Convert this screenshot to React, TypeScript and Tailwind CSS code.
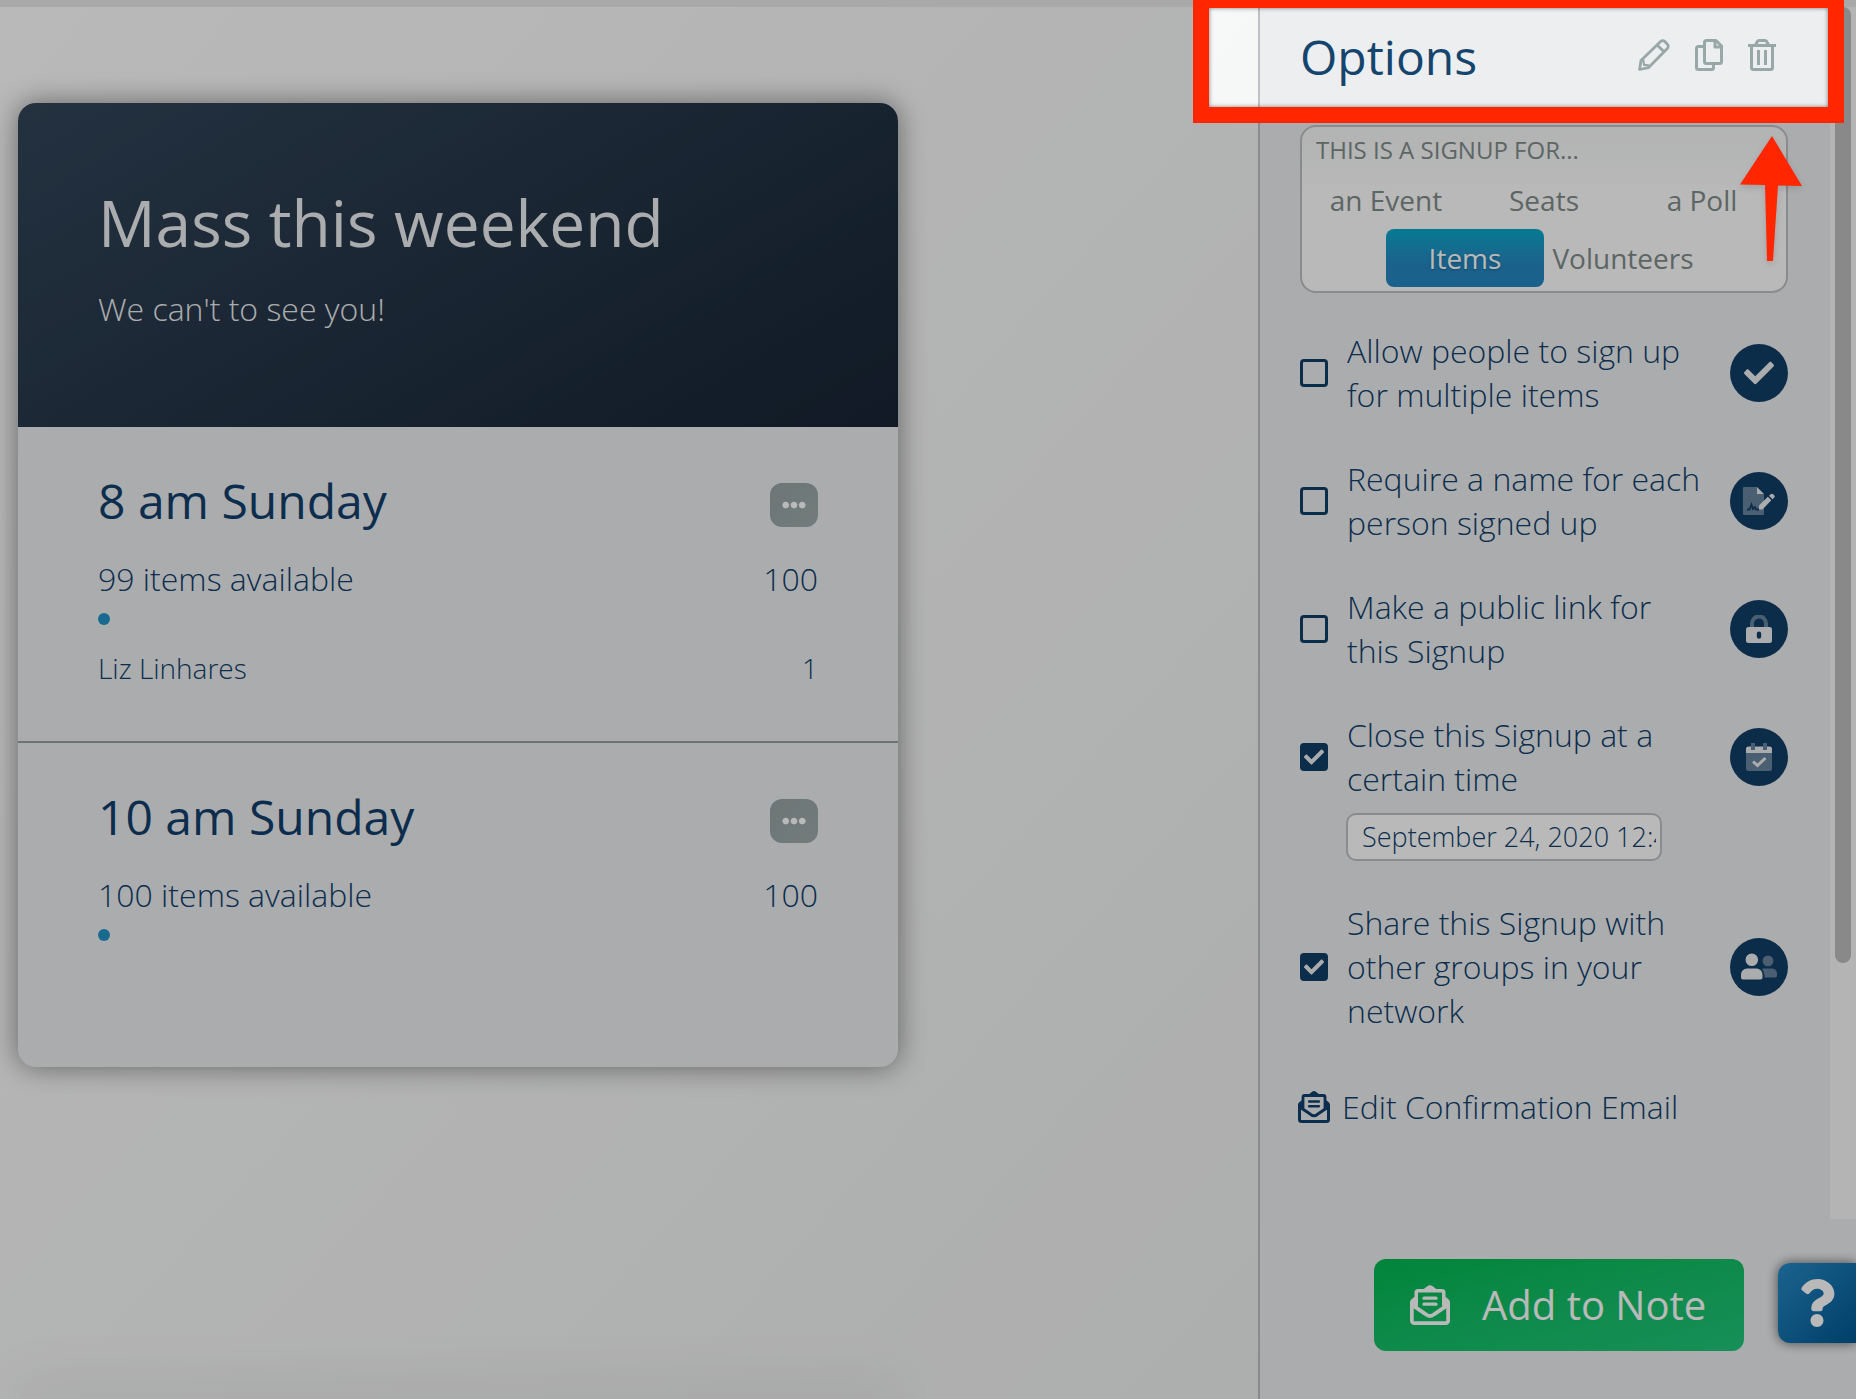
import React, { useState } from 'react';
import { FaCheck, FaEllipsisH, FaQuestion } from 'react-icons/fa';

interface IconProps {
  className?: string;
}

const PencilIcon: React.FC<IconProps> = ({ className }) => (
  <svg viewBox="0 0 32 32" fill="none" stroke="currentColor" strokeWidth="2.8" strokeLinejoin="round" className={className}>
    <path d="M3 21.5 22.6 2.6a3 3 0 0 1 4.2 0l2.6 2.6a3 3 0 0 1 0 4.2L10.6 28.6 1.6 30.5Z" />
    <path d="M19.4 6.2 25.8 12.6" />
    <path d="M3.6 21.6 5.4 21.6 6 25.8 10.4 26.4 10.6 28.4" strokeWidth="2.2" />
  </svg>
);

const CopyIcon: React.FC<IconProps> = ({ className }) => (
  <svg viewBox="0 0 28 32" fill="none" stroke="currentColor" strokeWidth="3" strokeLinejoin="round" className={className}>
    <path d="M8.5 7.5H3.5a2 2 0 0 0-2 2v19a2 2 0 0 0 2 2H16.5a2 2 0 0 0 2-2V25.5" />
    <path d="M11.5 1.5H21L26.5 7V22.5a2 2 0 0 1-2 2H11.5a2 2 0 0 1-2-2V3.5a2 2 0 0 1 2-2Z" />
    <path d="M20 1.5V8H26.5" />
  </svg>
);

const TrashIcon: React.FC<IconProps> = ({ className }) => (
  <svg viewBox="0 0 28 32" fill="none" stroke="currentColor" strokeWidth="3" strokeLinejoin="round" className={className}>
    <path d="M0 6.5H28" />
    <path d="M7.5 6 9.5 2.3Q10 1.5 11 1.5H17Q18 1.5 18.5 2.3L20.5 6" />
    <path d="M3.5 7V28.5a2 2 0 0 0 2 2H22.5a2 2 0 0 0 2-2V7" />
    <path d="M10.5 11V26M17.5 11V26" />
  </svg>
);

const EnvelopeIcon: React.FC<IconProps> = ({ className }) => (
  <svg viewBox="0 0 32 32" fill="none" stroke="currentColor" strokeWidth="3" strokeLinejoin="round" className={className}>
    <path d="M1.5 15V28.5a2 2 0 0 0 2 2H28.5a2 2 0 0 0 2-2V15" />
    <path d="M2.5 16.5 12.5 23.3Q16 26.2 19.5 23.3L29.5 16.5" />
    <path d="M5 17V6a1.5 1.5 0 0 1 1.5-1.5H25.5A1.5 1.5 0 0 1 27 6V17" strokeWidth="2.8" />
    <path d="M10 4 13.8 1Q16-.8 18.2 1L22 4ZM4.5 8.8 1.2 11.3Q0 12.3 0 14V16.5L4.5 19ZM27.5 8.8 30.8 11.3Q32 12.3 32 14V16.5L27.5 19Z" fill="currentColor" stroke="none" />
    <path d="M11.2 10.5H20.8M11.2 15.3H20.8" strokeWidth="2.6" strokeLinecap="round" />
  </svg>
);

const SignatureIcon: React.FC<IconProps> = ({ className }) => (
  <svg viewBox="0 0 32 28" fill="currentColor" className={className}>
    <path opacity=".4" d="M1 0H14V7H21V27a1 1 0 0 1-1 1H1a1 1 0 0 1-1-1V1a1 1 0 0 1 1-1Z" />
    <path d="M14 0 21 7H14ZM16 18.5 24.8 9.8 28.3 13.3 19.5 22.5H16ZM26 8.7 27.7 7.2Q29 6.2 30.2 7.2L31.2 8.2Q32.2 9.5 31.2 10.6L29.6 12.2Z" />
    <path d="M4 22.5H6.5L8.5 17.5 10 22 12 20 13 22.5H16" fill="none" stroke="#113e67" strokeWidth="1.8" />
  </svg>
);

const LockIcon: React.FC<IconProps> = ({ className }) => (
  <svg viewBox="0 0 26 28" className={className}>
    <path d="M6 12V8.5a7 7 0 0 1 14 0V12" fill="none" stroke="currentColor" strokeWidth="4" opacity=".4" />
    <path fill="currentColor" fillRule="evenodd" d="M2.5 12H23.5A2.5 2.5 0 0 1 26 14.5V25.5A2.5 2.5 0 0 1 23.5 28H2.5A2.5 2.5 0 0 1 0 25.5V14.5A2.5 2.5 0 0 1 2.5 12ZM13 16.5a2.2 2.2 0 0 0-2.2 2.2V21.5a2.2 2.2 0 0 0 4.4 0V18.7A2.2 2.2 0 0 0 13 16.5Z" />
  </svg>
);

const CalendarIcon: React.FC<IconProps> = ({ className }) => (
  <svg viewBox="0 0 26 28" fill="currentColor" className={className}>
    <path opacity=".4" d="M0 10H26V25.5a2.5 2.5 0 0 1-2.5 2.5H2.5A2.5 2.5 0 0 1 0 25.5ZM5 0H9V7H5ZM17 0H21V7H17Z" />
    <path d="M2.5 3.5H5V7H9V3.5H17V7H21V3.5H23.5A2.5 2.5 0 0 1 26 6V10H0V6A2.5 2.5 0 0 1 2.5 3.5Z" />
    <path d="M7 18.5 11.5 22.5 19.5 15" fill="none" stroke="currentColor" strokeWidth="3" />
  </svg>
);

const FriendsIcon: React.FC<IconProps> = ({ className }) => (
  <svg viewBox="0 0 36 28" fill="currentColor" className={className}>
    <path opacity=".4" d="M27 2.5a5.4 5.4 0 1 1 0 10.8 5.4 5.4 0 0 1 0-10.8ZM22 15.5H31a5 5 0 0 1 5 5V22.5a2 2 0 0 1-2 2H23.5Q23.5 18.5 21 16Z" />
    <path d="M10.8 .5a6.3 6.3 0 1 1 0 12.6 6.3 6.3 0 0 1 0-12.6ZM6 15.5H15.5a6 6 0 0 1 6 6V24.5a2 2 0 0 1-2 2H2a2 2 0 0 1-2-2V21.5a6 6 0 0 1 6-6Z" />
  </svg>
);

interface Slot {
  title: string;
  available: string;
  total: number;
  people: { name: string; count: number }[];
}

const slots: Slot[] = [
  { title: '8 am Sunday', available: '99 items available', total: 100, people: [{ name: 'Liz Linhares', count: 1 }] },
  { title: '10 am Sunday', available: '100 items available', total: 100, people: [] },
];

const signupTypes = ['an Event', 'Seats', 'a Poll', 'Items', 'Volunteers'];

const options = [
  { id: 'multiple', label: 'Allow people to sign up for multiple items', checked: false, icon: <FaCheck className="size-[30px]" /> },
  { id: 'names', label: 'Require a name for each person signed up', checked: false, icon: <SignatureIcon className="h-7 w-8" /> },
  { id: 'public', label: 'Make a public link for this Signup', checked: false, icon: <LockIcon className="h-7 w-[26px]" /> },
  { id: 'close', label: 'Close this Signup at a certain time', checked: true, date: 'September 24, 2020 12:45 PM', icon: <CalendarIcon className="h-7 w-[26px]" /> },
  { id: 'share', label: 'Share this Signup with other groups in your network', checked: true, icon: <FriendsIcon className="h-7 w-9" /> },
];

const SlotRow: React.FC<{ slot: Slot }> = ({ slot }) => (
  <section className="border-b-2 border-[#94a0a1] px-20 pt-10 pb-[54px] last:border-b-0 last:pb-[126px]">
    <div className="flex items-start justify-between">
      <h2 className="text-5xl leading-[68px]">{slot.title}</h2>
      <button
        type="button"
        aria-label="More"
        className="mt-4 flex h-11 w-12 items-center justify-center rounded-xl bg-linear-to-br from-[#97a3a3] to-[#9fabab] text-white"
      >
        <FaEllipsisH className="size-6" />
      </button>
    </div>
    <div className="mt-5 flex justify-between text-[32px] leading-12 font-light">
      <span>{slot.available}</span>
      <span>{slot.total}</span>
    </div>
    <div className="mt-[10px] size-3 rounded-full bg-[#2292c7]" />
    {slot.people.map((p) => (
      <div key={p.name} className="mt-6 flex justify-between text-[28px] leading-[38px] font-light">
        <span>{p.name}</span>
        <span>{p.count}</span>
      </div>
    ))}
  </section>
);

export default function App() {
  const [type, setType] = useState('Items');

  return (
    <div className="relative flex h-screen flex-col overflow-hidden bg-white font-['Open_Sans','Noto_Sans',sans-serif] text-[#113f6a]">
      <div className="h-[7px] shrink-0 bg-[#e9e9e9]" />

      <div className="flex min-h-0 flex-1">
        <main className="flex min-w-0 flex-1 flex-col justify-between overflow-hidden bg-linear-to-br from-white to-[#eff0f0] pt-24 pr-[360px] pl-[18px]">
          <article className="overflow-hidden rounded-[18px] bg-[#eceef0] shadow-[0_0_28px_rgba(0,0,0,0.45)]">
            <header className="bg-linear-150 from-[#324559] to-[#172434] px-20 pt-[74px] pb-[94px] text-[#eceef0]">
              <h1 className="text-[64px] leading-[92px]">Mass this weekend</h1>
              <p className="mt-4 text-[32px] leading-12 font-light">We can't to see you!</p>
            </header>
            {slots.map((slot) => (
              <SlotRow key={slot.title} slot={slot} />
            ))}
          </article>
          <div className="shadow-[0_0_60px_6px_rgba(0,0,0,0.2)]" />
        </main>

        <aside className="flex w-[598px] shrink-0 flex-col border-l-2 border-[#bdc0c4] bg-[#eceef0]">
          <div className="flex min-h-0 flex-1">
            <div className="flex-1 pr-[42px] pl-10">
              <header className="flex h-[118px] items-start justify-between pt-4 pr-3">
                <h2 className="text-5xl leading-[68px] text-[#15456d]">Options</h2>
                <div className="flex gap-[25px] pt-4 text-[#98a8a6]">
                  <button type="button" aria-label="Edit"><PencilIcon className="size-8" /></button>
                  <button type="button" aria-label="Copy"><CopyIcon className="h-8 w-7" /></button>
                  <button type="button" aria-label="Delete"><TrashIcon className="h-8 w-7" /></button>
                </div>
              </header>

              <section className="rounded-2xl border-2 border-[#bdc0c4] bg-white bg-linear-to-b from-[#f6f7f7] to-white to-40% pb-1 text-[#7f8d8a]">
                <h3 className="px-[14px] pt-0.5 text-2xl leading-[42px]">THIS IS A SIGNUP FOR...</h3>
                <div className="flex flex-wrap justify-center text-[28px]">
                  {signupTypes.map((t) => (
                    <button
                      key={t}
                      type="button"
                      onClick={() => setType(t)}
                      className={
                        t === type
                          ? 'h-[58px] w-[158px] rounded-lg bg-linear-to-b from-[#06a8cc] to-[#2587c1] to-60% text-white text-shadow-md'
                          : 'h-[58px] w-[158px]'
                      }
                    >
                      {t}
                    </button>
                  ))}
                </div>
              </section>

              <div className="mt-9 flex flex-col gap-10 text-[32px] leading-11 font-light">
                {options.map((o) => (
                  <div key={o.id}>
                    <div className="flex items-center">
                      <span className="relative flex size-7 shrink-0">
                        <input
                          id={o.id}
                          type="checkbox"
                          defaultChecked={o.checked}
                          className="peer size-7 appearance-none rounded-sm border-3 border-[#113e67] checked:bg-[#113e67]"
                        />
                        <FaCheck className="pointer-events-none absolute inset-1 hidden size-5 text-[#eceef0] peer-checked:block" />
                      </span>
                      <label htmlFor={o.id} className="ml-[19px] w-[356px]">{o.label}</label>
                      <span className="ml-auto flex size-[58px] items-center justify-center rounded-full bg-[#113e67] text-[#eceef0]">
                        {o.icon}
                      </span>
                    </div>
                    {o.date && (
                      <div className="mt-3 ml-[46px] w-[316px] rounded-[10px] border-2 border-[#bdc0c4] bg-white pr-1 pl-[14px]">
                        <input
                          type="text"
                          aria-label="Closing time"
                          defaultValue={o.date}
                          className="block h-11 w-full bg-transparent text-[27px] outline-none"
                        />
                      </div>
                    )}
                  </div>
                ))}
              </div>

              <a href="#email" className="mt-[52px] -ml-0.5 flex items-center gap-3 text-[32px] leading-11 font-light">
                <EnvelopeIcon className="size-8" />
                Edit Confirmation Email
              </a>
            </div>
            <div className="w-[26px] bg-[#f8f8f8] px-[5px]">
              <div className="h-[956px] rounded-full bg-[#bdbdbd]" />
            </div>
          </div>

          <footer className="flex h-[180px] shrink-0 items-start justify-end gap-[34px] pt-10">
            <button
              type="button"
              className="flex h-[92px] w-[370px] items-center gap-8 rounded-xl bg-linear-to-br from-[#01b750] to-[#21c67c] pl-9 text-[40px] text-white"
            >
              <EnvelopeIcon className="size-10" />
              Add to Note
            </button>
            <button
              type="button"
              aria-label="Help"
              className="mt-1 flex h-20 w-[78px] items-center justify-center rounded-l-xl bg-linear-to-br from-[#248ac5] to-[#015792] text-white shadow-[0_0_12px_rgba(0,0,0,0.6)]"
            >
              <FaQuestion className="size-12" />
            </button>
          </footer>
        </aside>
      </div>

      {/* Spotlight: everything outside the frame is dimmed by its spread shadow */}
      <div className="pointer-events-none absolute top-0 right-3 h-[123px] w-[651px] border-16 border-t-8 border-[#ff2600] shadow-[0_0_0_9999px_rgba(0,0,0,0.275),inset_0_0_4px_rgba(0,0,0,0.5)]" />
      <svg
        viewBox="0 0 64 130"
        className="pointer-events-none absolute top-[135px] right-[53px] h-[130px] w-16 drop-shadow-md"
        fill="#ff2600"
      >
        <path d="M33 1 63 51 39 50.5 34 126H28L26 50 1 49.5Z" />
      </svg>
    </div>
  );
}
